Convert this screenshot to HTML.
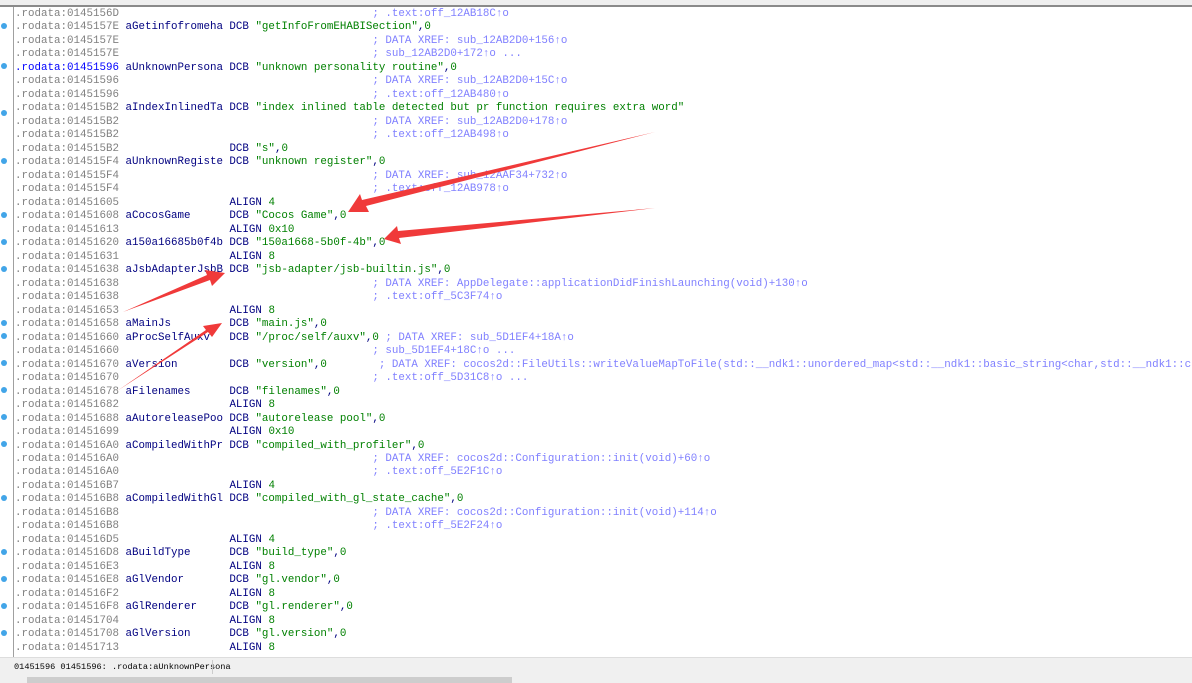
<!DOCTYPE html>
<html><head><meta charset="utf-8"><style>
html,body{margin:0;padding:0;background:#fff;width:1192px;height:683px;overflow:hidden;position:relative}
#top{position:absolute;left:0;top:0;width:1192px;height:5px;background:#efefef;border-bottom:2px solid #8a8a8a}
#vl{position:absolute;left:13px;top:7px;width:1px;height:650px;background:#a0a0a0}
pre{position:absolute;left:15px;top:8px;width:1177px;overflow:hidden;margin:0;font-family:"Liberation Mono",monospace;font-size:10.83px;line-height:13.49px;color:#808080;white-space:pre}
.l{color:#000080}.s{color:#008000}.c{color:#8080ff}.h{color:#0000ff}
.d{position:absolute;left:1px;width:6px;height:6px;border-radius:3px;background:#42a5e8}
#st{position:absolute;left:0;top:657px;width:1192px;height:26px;background:#f0f0f0;border-top:1px solid #ddd}
#st span{position:absolute;left:14px;top:4px;font-family:"Liberation Mono",monospace;font-size:8.6px;color:#000}
#sep{position:absolute;left:212px;top:2px;width:1px;height:14px;background:#ccc}
#sb{position:absolute;left:27px;top:677px;width:485px;height:6px;background:#cdcdcd}
</style></head><body>
<div id="top"></div><div id="vl"></div>
<pre>.rodata:0145156D                                       <span class="c">; .text:off_12AB18C↑o</span>
.rodata:0145157E <span class="l">aGetinfofromeha DCB </span><span class="s">"getInfoFromEHABISection"</span><span class="l">,</span><span class="s">0</span>
.rodata:0145157E                                       <span class="c">; DATA XREF: sub_12AB2D0+156↑o</span>
.rodata:0145157E                                       <span class="c">; sub_12AB2D0+172↑o ...</span>
<span class="h">.rodata:01451596</span> <span class="l">aUnknownPersona DCB </span><span class="s">"unknown personality routine"</span><span class="l">,</span><span class="s">0</span>
.rodata:01451596                                       <span class="c">; DATA XREF: sub_12AB2D0+15C↑o</span>
.rodata:01451596                                       <span class="c">; .text:off_12AB480↑o</span>
.rodata:014515B2 <span class="l">aIndexInlinedTa DCB </span><span class="s">"index inlined table detected but pr function requires extra word"</span>
.rodata:014515B2                                       <span class="c">; DATA XREF: sub_12AB2D0+178↑o</span>
.rodata:014515B2                                       <span class="c">; .text:off_12AB498↑o</span>
.rodata:014515B2                 <span class="l">DCB </span><span class="s">"s"</span><span class="l">,</span><span class="s">0</span>
.rodata:014515F4 <span class="l">aUnknownRegiste DCB </span><span class="s">"unknown register"</span><span class="l">,</span><span class="s">0</span>
.rodata:014515F4                                       <span class="c">; DATA XREF: sub_12AAF34+732↑o</span>
.rodata:014515F4                                       <span class="c">; .text:off_12AB978↑o</span>
.rodata:01451605                 <span class="l">ALIGN </span><span class="s">4</span>
.rodata:01451608 <span class="l">aCocosGame      DCB </span><span class="s">"Cocos Game"</span><span class="l">,</span><span class="s">0</span>
.rodata:01451613                 <span class="l">ALIGN </span><span class="s">0x10</span>
.rodata:01451620 <span class="l">a150a16685b0f4b DCB </span><span class="s">"150a1668-5b0f-4b"</span><span class="l">,</span><span class="s">0</span>
.rodata:01451631                 <span class="l">ALIGN </span><span class="s">8</span>
.rodata:01451638 <span class="l">aJsbAdapterJsbB DCB </span><span class="s">"jsb-adapter/jsb-builtin.js"</span><span class="l">,</span><span class="s">0</span>
.rodata:01451638                                       <span class="c">; DATA XREF: AppDelegate::applicationDidFinishLaunching(void)+130↑o</span>
.rodata:01451638                                       <span class="c">; .text:off_5C3F74↑o</span>
.rodata:01451653                 <span class="l">ALIGN </span><span class="s">8</span>
.rodata:01451658 <span class="l">aMainJs         DCB </span><span class="s">"main.js"</span><span class="l">,</span><span class="s">0</span>
.rodata:01451660 <span class="l">aProcSelfAuxv   DCB </span><span class="s">"/proc/self/auxv"</span><span class="l">,</span><span class="s">0</span> <span class="c">; DATA XREF: sub_5D1EF4+18A↑o</span>
.rodata:01451660                                       <span class="c">; sub_5D1EF4+18C↑o ...</span>
.rodata:01451670 <span class="l">aVersion        DCB </span><span class="s">"version"</span><span class="l">,</span><span class="s">0</span>        <span class="c">; DATA XREF: cocos2d::FileUtils::writeValueMapToFile(std::__ndk1::unordered_map&lt;std::__ndk1::basic_string&lt;char,std::__ndk1::char_t</span>
.rodata:01451670                                       <span class="c">; .text:off_5D31C8↑o ...</span>
.rodata:01451678 <span class="l">aFilenames      DCB </span><span class="s">"filenames"</span><span class="l">,</span><span class="s">0</span>
.rodata:01451682                 <span class="l">ALIGN </span><span class="s">8</span>
.rodata:01451688 <span class="l">aAutoreleasePoo DCB </span><span class="s">"autorelease pool"</span><span class="l">,</span><span class="s">0</span>
.rodata:01451699                 <span class="l">ALIGN </span><span class="s">0x10</span>
.rodata:014516A0 <span class="l">aCompiledWithPr DCB </span><span class="s">"compiled_with_profiler"</span><span class="l">,</span><span class="s">0</span>
.rodata:014516A0                                       <span class="c">; DATA XREF: cocos2d::Configuration::init(void)+60↑o</span>
.rodata:014516A0                                       <span class="c">; .text:off_5E2F1C↑o</span>
.rodata:014516B7                 <span class="l">ALIGN </span><span class="s">4</span>
.rodata:014516B8 <span class="l">aCompiledWithGl DCB </span><span class="s">"compiled_with_gl_state_cache"</span><span class="l">,</span><span class="s">0</span>
.rodata:014516B8                                       <span class="c">; DATA XREF: cocos2d::Configuration::init(void)+114↑o</span>
.rodata:014516B8                                       <span class="c">; .text:off_5E2F24↑o</span>
.rodata:014516D5                 <span class="l">ALIGN </span><span class="s">4</span>
.rodata:014516D8 <span class="l">aBuildType      DCB </span><span class="s">"build_type"</span><span class="l">,</span><span class="s">0</span>
.rodata:014516E3                 <span class="l">ALIGN </span><span class="s">8</span>
.rodata:014516E8 <span class="l">aGlVendor       DCB </span><span class="s">"gl.vendor"</span><span class="l">,</span><span class="s">0</span>
.rodata:014516F2                 <span class="l">ALIGN </span><span class="s">8</span>
.rodata:014516F8 <span class="l">aGlRenderer     DCB </span><span class="s">"gl.renderer"</span><span class="l">,</span><span class="s">0</span>
.rodata:01451704                 <span class="l">ALIGN </span><span class="s">8</span>
.rodata:01451708 <span class="l">aGlVersion      DCB </span><span class="s">"gl.version"</span><span class="l">,</span><span class="s">0</span>
.rodata:01451713                 <span class="l">ALIGN </span><span class="s">8</span></pre>
<div class="d" style="top:23px"></div><div class="d" style="top:63px"></div><div class="d" style="top:110px"></div>
<div class="d" style="top:158px"></div><div class="d" style="top:212px"></div><div class="d" style="top:239px"></div>
<div class="d" style="top:266px"></div><div class="d" style="top:320px"></div><div class="d" style="top:333px"></div>
<div class="d" style="top:360px"></div><div class="d" style="top:387px"></div><div class="d" style="top:414px"></div>
<div class="d" style="top:441px"></div><div class="d" style="top:495px"></div><div class="d" style="top:549px"></div>
<div class="d" style="top:576px"></div><div class="d" style="top:603px"></div><div class="d" style="top:630px"></div>
<svg style="position:absolute;left:0;top:0" width="1192" height="683">
<g fill="#f03a3a">
<polygon points="655,132 362,200 360,194 348,212 369,212 366,206"/>
<polygon points="655,208 398,231 397,226 384,239 401,244 399,238"/>
<polygon points="123,312 210,280 212,286 225,273 205,270 207,275"/>
<polygon points="117,391 208,332 212,337 222,323 203,326 206,330"/>
</g></svg>
<div id="st"><span>01451596 01451596: .rodata:aUnknownPersona</span><div id="sep"></div></div>
<div id="sb"></div>
</body></html>
